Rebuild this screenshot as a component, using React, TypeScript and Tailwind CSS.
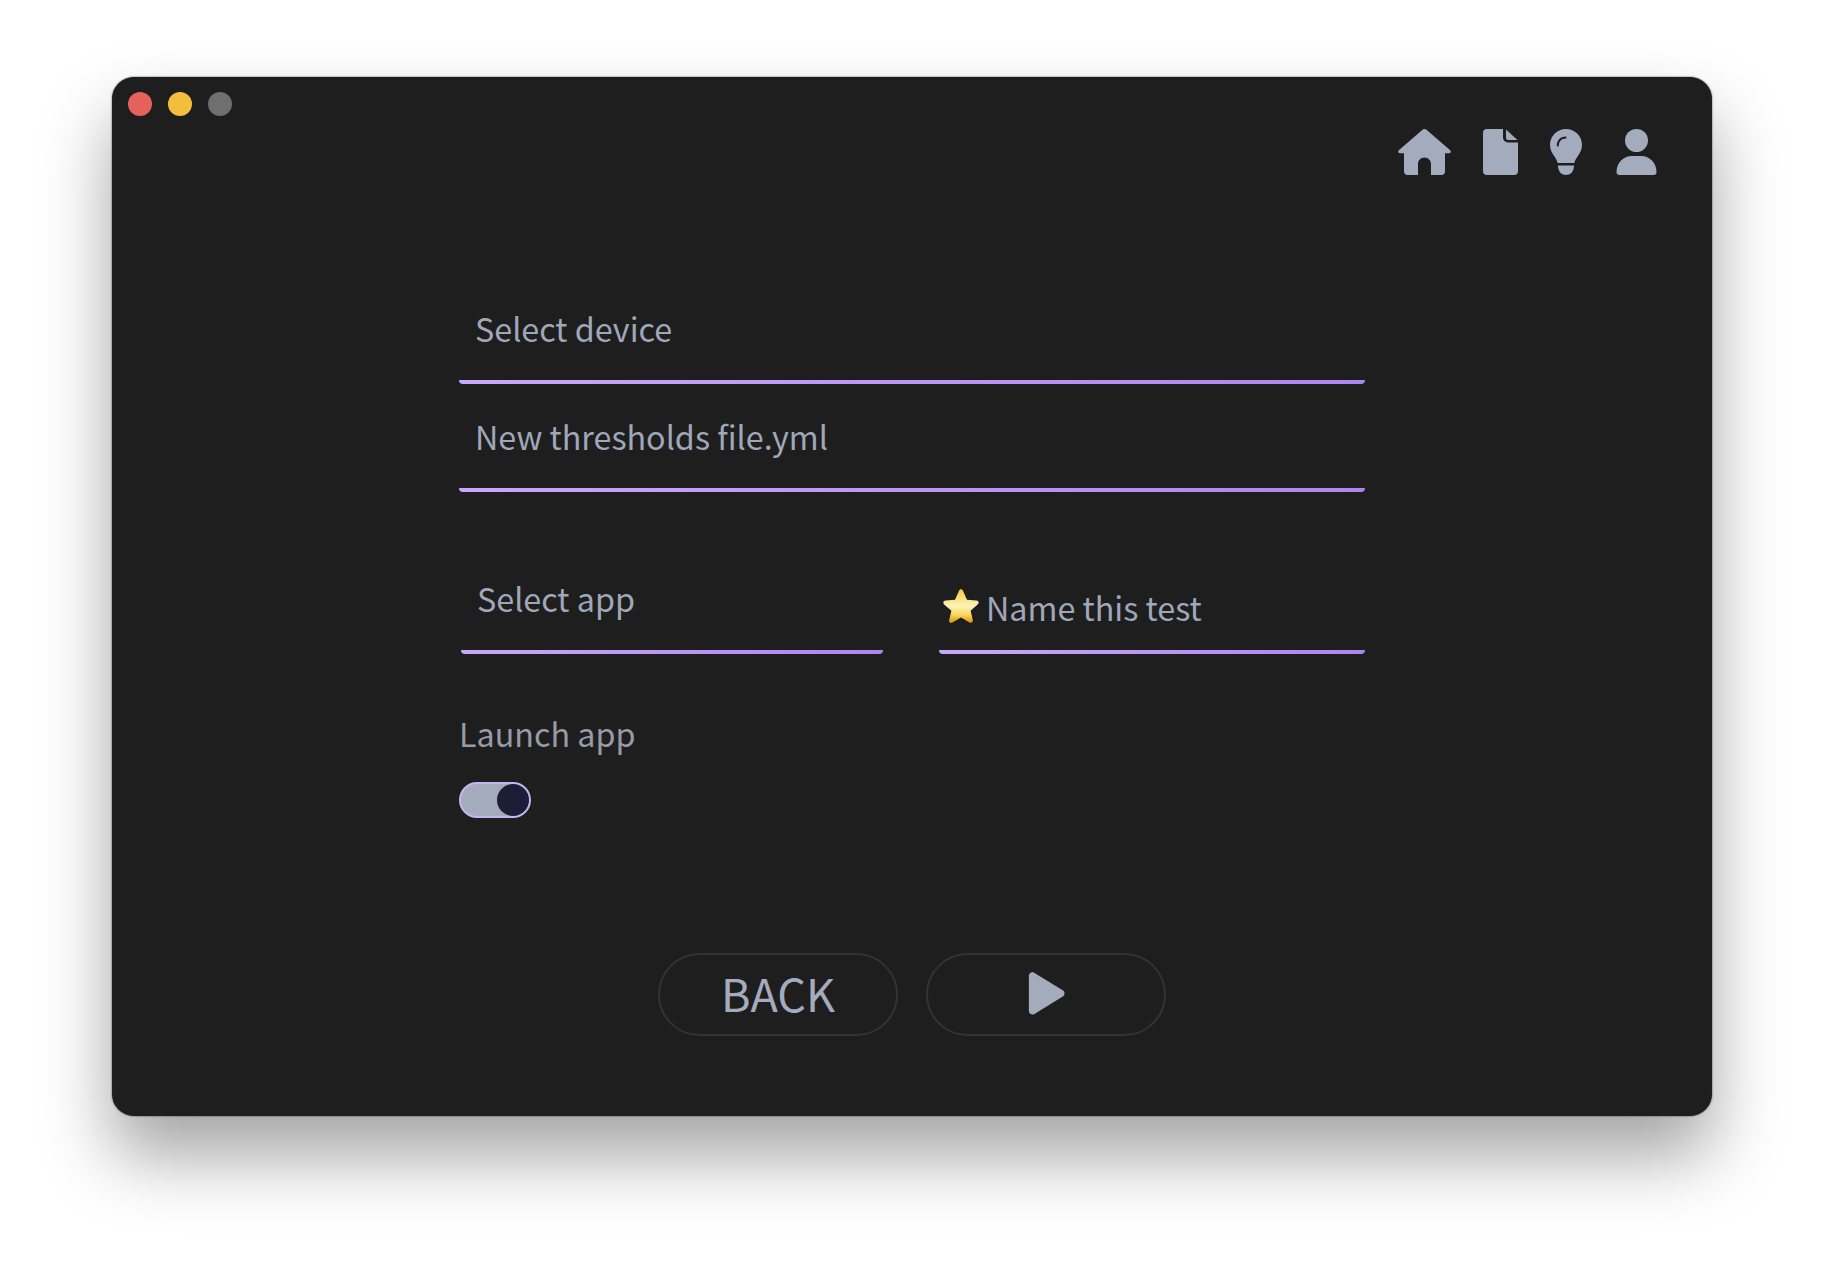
const Field = ({ label, className = "" }: { label: string; className?: string }) => (
  <div className={`flex flex-col ${className}`}>
    <div className="h-[68px] pl-4 text-[#9fa7b9] leading-[32px]">{label}</div>
    <div className="h-1 rounded-b-[4px] bg-gradient-to-r from-[#c9a8f7] to-[#ad85f0]" />
  </div>
);

const Star = () => (
  <svg viewBox="0 0 36 34" className="w-[38px] h-9 shrink-0 mb-[26px]">
    <defs>
      <linearGradient id="starFill" x1="0" y1="0" x2="0" y2="1">
        <stop offset="0" stopColor="#f7c83c" />
        <stop offset="0.5" stopColor="#fdf3b8" />
        <stop offset="0.75" stopColor="#f9d75e" />
        <stop offset="1" stopColor="#d9920f" />
      </linearGradient>
    </defs>
    <path
      d="M18 1.200c.9 0 1.600.6 2 1.500l3.600 8.300 9.100.8c2 .2 2.700 2.400 1.300 3.600l-6.900 6 2.100 8.900c.4 1.900-1.500 3.300-3.100 2.300L18 27.900l-8.100 4.800c-1.600 1-3.500-.4-3.100-2.300l2.100-8.900-6.900-6c-1.400-1.200-.7-3.400 1.300-3.600l9.100-.8L16 2.700c.4-.9 1.100-1.500 2-1.500z"
      fill="url(#starFill)"
    />
  </svg>
);

export default function App() {
  return (
    <div className="min-h-[1264px] bg-white pt-[77px] pl-[112px]" style={{ fontFamily: '"Noto Sans CJK SC", "Noto Sans", sans-serif' }}>
      <div className="w-[1600px] h-[1039px] rounded-[22px] bg-[#1e1e1e] shadow-[0_40px_70px_rgba(0,0,0,0.36),0_0_2px_rgba(0,0,0,0.7)] flex flex-col text-[32.3px] font-normal">
        <div className="flex items-start justify-between pl-4 pr-[55px] pt-[15px] h-[100px]">
          <div className="flex gap-4">
            <span className="w-6 h-6 rounded-full bg-[#e5615b]" />
            <span className="w-6 h-6 rounded-full bg-[#f3bd3e]" />
            <span className="w-6 h-6 rounded-full bg-[#6f6f6f]" />
          </div>
          <div className="flex items-end h-[46px] mt-[37px]">
            <svg viewBox="0 0 53 46" className="w-[53px] h-[46px]" fill="#a3abbd">
              <path d="M26.500 0a3 3 0 0 1 2 .8l23.700 20.400c1.200 1.100.5 3-1.200 3H47v18.300c0 2-1.500 3.500-3.500 3.500H33V35c0-3.600-2.900-6.500-6.500-6.500S20 31.400 20 35v11H9.500C7.500 46 6 44.500 6 42.500V24.200H2c-1.700 0-2.400-1.900-1.200-3L24.500.8a3 3 0 0 1 2-.8z" />
            </svg>
            <svg viewBox="0 0 35 46" className="w-[35px] h-[46px] ml-8" fill="#a3abbd">
              <path d="M4 0h16v8.500a5 5 0 0 0 5 5H35V42a4 4 0 0 1-4 4H4a4 4 0 0 1-4-4V4a4 4 0 0 1 4-4z" />
              <path d="M23 .5L34.500 11H25a2 2 0 0 1-2-2z" />
            </svg>
            <svg viewBox="0 0 32 46" className="w-8 h-[46px] ml-8" fill="#a3abbd">
              <path fillRule="evenodd" d="M16 0c8.800 0 16 7 16 15.700 0 5-2.100 8.300-4.300 11.600-1.300 2-2.600 4-3.400 6.700H7.700c-.8-2.700-2.100-4.700-3.400-6.700C2.100 24 0 20.700 0 15.700 0 7 7.200 0 16 0zM6.800 16.500c0 .6.400 1 1 1s1-.4 1-1c0-3.800 3-6.900 6.700-6.900.6 0 1-.4 1-1s-.4-1-1-1c-4.900 0-8.700 4-8.700 8.900z" />
              <path d="M8 36.500h16c0 .8-.1 2.500-.6 3.800C22.500 43.700 20 46 16 46s-6.500-2.300-7.400-5.700C8.100 39 8 37.300 8 36.500z" />
            </svg>
            <svg viewBox="0 0 41 46" className="w-[41px] h-[46px] ml-[34px]" fill="#a3abbd">
              <circle cx="20.500" cy="11.500" r="11.500" />
              <path d="M.5 43c0-10 8-16 15-16h10c7 0 15 6 15 16 0 2-1 3-3 3h-34c-2 0-3-1-3-3z" />
            </svg>
          </div>
        </div>

        <div className="ml-[347px] w-[906px] mt-[135px] flex flex-col">
          <Field label="Select device" />
          <Field label="New thresholds file.yml" className="mt-[36px]" />
          <div className="flex justify-between mt-[90px]">
            <Field label="Select app" className="w-[422px] ml-[2px]" />
            <div className="w-[426px] flex flex-col">
              <div className="h-[68px] flex items-end pl-[3px] gap-[6px] text-[#9fa7b9]">
                <Star />
                <span className="h-[59px] leading-[32px]">Name this test</span>
              </div>
              <div className="h-1 rounded-b-[4px] bg-gradient-to-r from-[#c9a8f7] to-[#ad85f0]" />
            </div>
          </div>
          <div className="mt-[55px] leading-[48px] text-[#979ba6]">Launch app</div>
          <div className="mt-[25px] w-[72px] h-9 rounded-full border-2 border-[#c9b3f2] bg-[#a3abbd] flex justify-end">
            <span className="w-8 h-8 rounded-full bg-[#1b1e36]" />
          </div>
        </div>

        <div className="flex justify-center gap-7 mt-[135px]">
          <button className="w-[240px] h-[83px] pb-1 rounded-full border-2 border-[#333333] text-[#a3abbd] text-[45px] font-normal">BACK</button>
          <button className="w-[240px] h-[83px] pl-[2px] pb-[2px] rounded-full border-2 border-[#333333] flex items-center justify-center">
            <svg viewBox="0 0 38 45" className="w-[38px] h-[43px]" fill="#a3abbd">
              <path d="M0 4c0-3 3-4.800 5.500-3.300l30 18.500c2.400 1.500 2.400 5 0 6.500l-30 18.500C3 45.300 0 43.500 0 40.500z" />
            </svg>
          </button>
        </div>
      </div>
    </div>
  );
}
